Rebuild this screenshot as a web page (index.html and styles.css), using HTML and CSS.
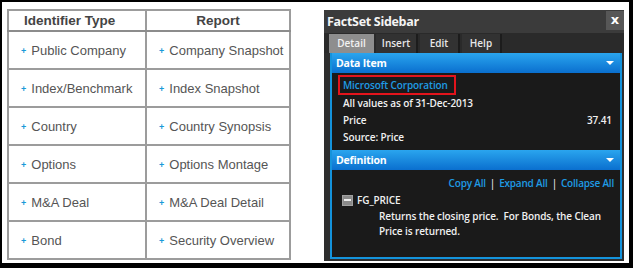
FILE: index.html
```html
<!DOCTYPE html>
<html>
<head>
<meta charset="utf-8">
<link rel="stylesheet" href="styles.css">
</head>
<body>
<div class="frame">
  <table class="ids">
    <thead>
      <tr><th>Identifier Type</th><th>Report</th></tr>
    </thead>
    <tbody>
      <tr><td><span class="plus">+</span>Public Company</td><td><span class="plus">+</span>Company Snapshot</td></tr>
      <tr><td><span class="plus">+</span>Index/Benchmark</td><td><span class="plus">+</span>Index Snapshot</td></tr>
      <tr><td><span class="plus">+</span>Country</td><td><span class="plus">+</span>Country Synopsis</td></tr>
      <tr><td><span class="plus">+</span>Options</td><td><span class="plus">+</span>Options Montage</td></tr>
      <tr><td><span class="plus">+</span>M&amp;A Deal</td><td><span class="plus">+</span>M&amp;A Deal Detail</td></tr>
      <tr><td><span class="plus">+</span>Bond</td><td><span class="plus">+</span>Security Overview</td></tr>
    </tbody>
  </table>

  <div class="sidebar">
    <div class="titlebar">
      <span class="title">FactSet Sidebar</span>
      <span class="close">x</span>
    </div>
    <div class="tabs">
      <span class="tab active t1">Detail</span>
      <span class="tab t2">Insert</span>
      <span class="tab t3">Edit</span>
      <span class="tab t4">Help</span>
    </div>
    <div class="section">
      <div class="shead"><span>Data Item</span><span class="tri"></span></div>
      <div class="sbody data">
        <div class="company"><span class="boxed">Microsoft Corporation</span></div>
        <div class="line">All values as of 31-Dec-2013</div>
        <div class="line row"><span>Price</span><span>37.41</span></div>
        <div class="line">Source: Price</div>
      </div>
      <div class="shead"><span>Definition</span><span class="tri"></span></div>
      <div class="sbody def">
        <div class="links"><span class="lnk">Copy All</span><span class="sep">|</span><span class="lnk">Expand All</span><span class="sep">|</span><span class="lnk">Collapse All</span></div>
        <div class="item"><span class="minus"><span></span></span>FG_PRICE</div>
        <div class="desc">Returns the closing price.&nbsp; For Bonds, the Clean Price is returned.</div>
      </div>
    </div>
  </div>
</div>
</body>
</html>
```

FILE: styles.css
```css
html, body {
  margin: 0;
  padding: 0;
  background: #000;
}
body {
  width: 633px;
  height: 268px;
  overflow: hidden;
}
.frame {
  margin: 2px 0 0 2px;
  width: 627px;
  height: 261px;
  background: #fff;
  display: flex;
  align-items: flex-start;
  box-sizing: border-box;
  padding: 7px 0 0 5px;
}
.ids {
  border-collapse: collapse;
  width: 284px;
  flex: none;
  table-layout: fixed;
  font-family: "Liberation Sans", Arial, sans-serif;
  font-size: 13px;
  color: #555;
  border: 2px solid #8c8c8c;
}
.ids th, .ids td {
  border: 2px solid #9c9c9c;
  padding: 0;
}
.ids th {
  height: 19px;
  font-weight: bold;
  color: #444;
  font-size: 13.5px;
  text-align: center;
  border-bottom-color: #8c8c8c;
}
.ids th:first-child { text-align: left; padding-left: 15px; }
.ids th:nth-child(1) { width: 121px; }
.ids td {
  height: 36px;
  padding-left: 12px;
  white-space: nowrap;
  overflow: hidden;
}
.plus {
  color: #1a9ad8;
  font-size: 9px;
  font-weight: bold;
  margin-right: 5px;
  position: relative;
  top: -1px;
}
.sidebar {
  margin-left: 33px;
  margin-top: 1px;
  width: 300px;
  flex: none;
  height: 251px;
  background: #2e2e2e;
  font-family: "Open Sans", "Noto Sans", sans-serif;
  color: #f0f0f0;
  display: flex;
  flex-direction: column;
}
.titlebar {
  height: 23px;
  background: #3b3b3b;
  display: flex;
  align-items: center;
  justify-content: space-between;
  padding-left: 3px;
}
.title {
  font-family: "Open Sans", sans-serif;
  font-weight: bold;
  font-size: 12.5px;
  letter-spacing: -0.3px;
  color: #f4f4f4;
}
.close {
  width: 18px;
  height: 19px;
  background: #575757;
  color: #fff;
  font-family: "DejaVu Sans", sans-serif;
  font-weight: bold;
  font-size: 13px;
  line-height: 17px;
  text-align: center;
  align-self: flex-start;
  margin-top: 1px;
}
.tabs {
  height: 20px;
  background: #2a2a2a;
  display: flex;
  align-items: flex-end;
  padding-left: 5px;
  gap: 2px;
}
.tab {
  height: 19px;
  font-size: 10px;
  font-weight: 600;
  line-height: 19px;
  text-align: center;
  color: #e8e8e8;
  background: #323232;
  border-right: 2px solid #1c1c1c;
  box-sizing: border-box;
}
.t1 { width: 45px; }
.t2 { width: 42px; }
.t3 { width: 40px; }
.t4 { width: 40px; }
.tab.active {
  background: #8e8e8e;
  border-right: none;
  color: #f2f2f2;
}
.section {
  margin: 0 2px 2px 6px;
  border: 2px solid #1493dc;
  border-top: none;
  flex: 1;
  display: flex;
  flex-direction: column;
  background: #1a1a1a;
}
.shead {
  height: 20px;
  background: linear-gradient(#2aa5ee, #0a6fcf);
  display: flex;
  align-items: center;
  justify-content: space-between;
  padding: 0 6px 0 4px;
  font-size: 10.5px;
  font-weight: bold;
  color: #fff;
  letter-spacing: -0.2px;
}
.tri {
  width: 0;
  height: 0;
  border-left: 4px solid transparent;
  border-right: 4px solid transparent;
  border-top: 4px solid #fff;
}
.sbody {
  font-size: 10px;
  font-weight: 600;
  letter-spacing: -0.1px;
}
.data {
  padding: 1px 8px 4px 6px;
}
.company {
  height: 21px;
  display: flex;
  align-items: center;
}
.boxed {
  border: 2px solid #e3141c;
  color: #1f9be3;
  padding: 0 6px 0 3px;
  height: 16px;
  line-height: 16px;
}
.line {
  height: 17px;
  line-height: 17px;
  padding-left: 5px;
}
.row {
  display: flex;
  justify-content: space-between;
}
.def {
  flex: 1;
  padding: 4px 6px 0 10px;
}
.links {
  text-align: right;
  color: #1f9be3;
  height: 18px;
  line-height: 18px;
  font-size: 10px;
  letter-spacing: -0.2px;
}
.sep {
  color: #ddd;
  margin: 0 4px;
}
.item {
  display: flex;
  align-items: center;
  height: 16px;
  margin-top: 0;
}
.minus {
  width: 11px;
  height: 11px;
  background: #8a8a8a;
  border: 1px solid #a0a0a0;
  box-sizing: border-box;
  display: inline-flex;
  align-items: center;
  justify-content: center;
  margin-right: 4px;
}
.minus span {
  width: 7px;
  height: 1.5px;
  background: #eee;
}
.desc {
  padding-left: 37px;
  line-height: 15px;
  margin-top: 1px;
  width: 228px;
}
```
